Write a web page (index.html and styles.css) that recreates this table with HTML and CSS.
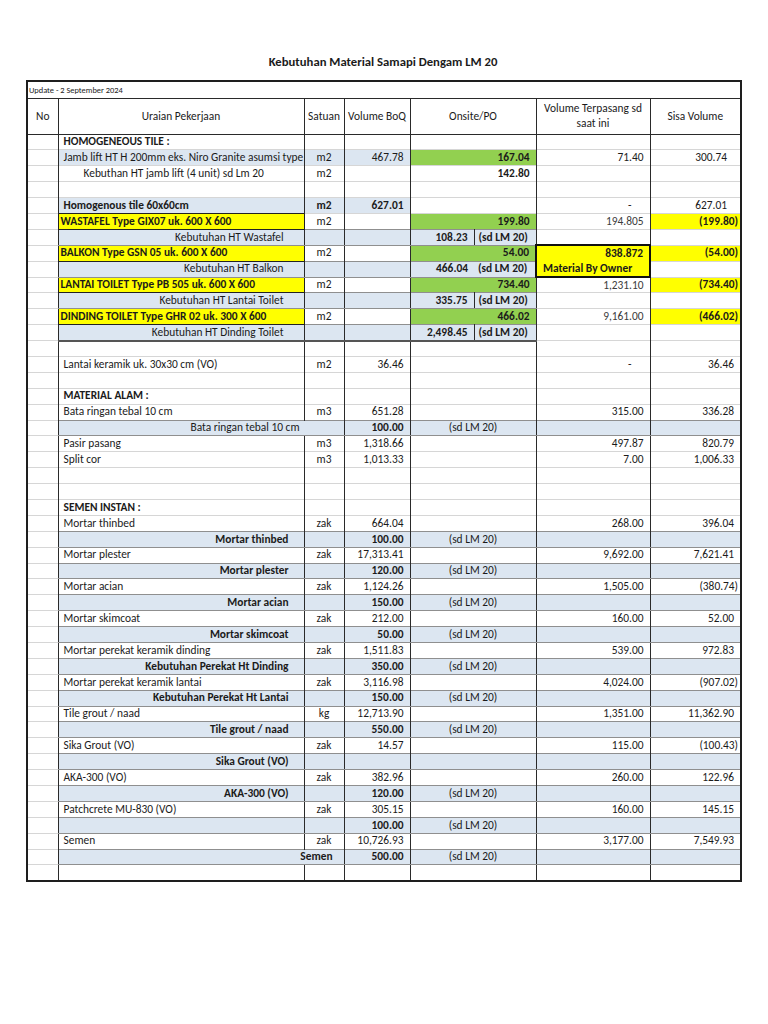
FILE: index.html
```html
<!DOCTYPE html>
<html lang="id">
<head>
<meta charset="utf-8">
<title>Kebutuhan Material</title>
<link rel="stylesheet" href="styles.css">
</head>
<body>
<div class="sheet">
  <div class="title">Kebutuhan Material Samapi Dengam LM 20</div>
  <table class="grid">
    <colgroup>
      <col class="w-no"><col class="w-ur"><col class="w-sat"><col class="w-vol"><col class="w-ona"><col class="w-onb"><col class="w-ter"><col class="w-sisa">
    </colgroup>
    <thead>
      <tr class="upd"><td colspan="8">Update - 2 September 2024</td></tr>
      <tr class="hdr">
        <th>No</th><th>Uraian Pekerjaan</th><th>Satuan</th><th>Volume BoQ</th><th colspan="2">Onsite/PO</th><th>Volume Terpasang sd<br>saat ini</th><th>Sisa Volume</th>
      </tr>
    </thead>
    <tbody>
      <tr><td></td><td class="t b">HOMOGENEOUS TILE :</td><td></td><td></td><td colspan="2"></td><td></td><td></td></tr>
      <tr><td></td><td class="t bl">Jamb lift HT H 200mm eks. Niro Granite asumsi type</td><td class="c bl">m2</td><td class="n bl">467.78</td><td colspan="2" class="n b gr">167.04</td><td class="n">71.40</td><td class="n acc">300.74</td></tr>
      <tr><td></td><td class="t ind">Kebuthan HT jamb lift (4 unit) sd Lm 20</td><td class="c">m2</td><td></td><td colspan="2" class="n b">142.80</td><td></td><td></td></tr>
      <tr><td></td><td></td><td></td><td></td><td colspan="2"></td><td></td><td></td></tr>
      <tr><td></td><td class="t b bl">Homogenous tile 60x60cm</td><td class="c b bl">m2</td><td class="n b bl">627.01</td><td colspan="2"></td><td class="n dash">-</td><td class="n acc">627.01</td></tr>
      <tr><td></td><td class="t b ye box">WASTAFEL Type GIX07 uk. 600 X 600</td><td class="c">m2</td><td></td><td colspan="2" class="n b gr">199.80</td><td class="n gray">194.805</td><td class="n neg b ye">(199.80)</td></tr>
      <tr><td></td><td class="lab bl sub">Kebutuhan HT Wastafel</td><td class="bl sub"></td><td class="bl sub"></td><td class="n b bl sub sep">108.23</td><td class="sd b bl sub nl">(sd LM 20)</td><td></td><td></td></tr>
      <tr><td></td><td class="t b ye box">BALKON Type GSN 05 uk. 600 X 600</td><td class="c">m2</td><td></td><td colspan="2" class="n b gr">54.00</td><td class="n b ye mbo1">838.872</td><td class="n neg b ye">(54.00)</td></tr>
      <tr><td></td><td class="lab bl sub">Kebutuhan HT Balkon</td><td class="bl sub"></td><td class="bl sub"></td><td class="n b bl sub">466.04</td><td class="sd b bl sub nl">(sd LM 20)</td><td class="t b ye mbo2">Material By Owner</td><td></td></tr>
      <tr><td></td><td class="t b ye box">LANTAI TOILET Type PB 505 uk. 600 X 600</td><td class="c">m2</td><td></td><td colspan="2" class="n b gr">734.40</td><td class="n gray">1,231.10</td><td class="n neg b ye">(734.40)</td></tr>
      <tr><td></td><td class="lab bl sub">Kebutuhan HT Lantai Toilet</td><td class="bl sub"></td><td class="bl sub"></td><td class="n b bl sub sep">335.75</td><td class="sd b bl sub nl">(sd LM 20)</td><td></td><td></td></tr>
      <tr><td></td><td class="t b ye box">DINDING TOILET Type GHR 02 uk. 300 X 600</td><td class="c">m2</td><td></td><td colspan="2" class="n b gr">466.02</td><td class="n gray">9,161.00</td><td class="n neg b ye">(466.02)</td></tr>
      <tr><td></td><td class="lab bl sub last">Kebutuhan HT Dinding Toilet</td><td class="bl sub last"></td><td class="bl sub last"></td><td class="n b bl sub sep last">2,498.45</td><td class="sd b bl sub nl last">(sd LM 20)</td><td></td><td></td></tr>
      <tr><td></td><td></td><td></td><td></td><td colspan="2"></td><td></td><td></td></tr>
      <tr><td></td><td class="t">Lantai keramik uk. 30x30 cm (VO)</td><td class="c">m2</td><td class="n">36.46</td><td colspan="2"></td><td class="n dash">-</td><td class="n">36.46</td></tr>
      <tr><td></td><td></td><td></td><td></td><td colspan="2"></td><td></td><td></td></tr>
      <tr><td></td><td class="t b">MATERIAL ALAM :</td><td></td><td></td><td colspan="2"></td><td></td><td></td></tr>
      <tr><td></td><td class="t">Bata ringan tebal 10 cm</td><td class="c">m3</td><td class="n">651.28</td><td colspan="2"></td><td class="n">315.00</td><td class="n">336.28</td></tr>
      <tr><td></td><td colspan="2" class="lab-bata bl sub">Bata ringan tebal 10 cm</td><td class="n b bl sub">100.00</td><td colspan="2" class="c bl sub">(sd LM 20)</td><td class="bl sub"></td><td class="bl sub"></td></tr>
      <tr><td></td><td class="t">Pasir pasang</td><td class="c">m3</td><td class="n">1,318.66</td><td colspan="2"></td><td class="n">497.87</td><td class="n">820.79</td></tr>
      <tr><td></td><td class="t">Split cor</td><td class="c">m3</td><td class="n">1,013.33</td><td colspan="2"></td><td class="n">7.00</td><td class="n">1,006.33</td></tr>
      <tr><td></td><td></td><td></td><td></td><td colspan="2"></td><td></td><td></td></tr>
      <tr><td></td><td></td><td></td><td></td><td colspan="2"></td><td></td><td></td></tr>
      <tr><td></td><td class="t b">SEMEN INSTAN :</td><td></td><td></td><td colspan="2"></td><td></td><td></td></tr>
      <tr><td></td><td class="t">Mortar thinbed</td><td class="c">zak</td><td class="n">664.04</td><td colspan="2"></td><td class="n">268.00</td><td class="n">396.04</td></tr>
      <tr><td></td><td class="lab2 b bl sub">Mortar thinbed</td><td class="bl sub"></td><td class="n b bl sub">100.00</td><td colspan="2" class="c bl sub">(sd LM 20)</td><td class="bl sub"></td><td class="bl sub"></td></tr>
      <tr><td></td><td class="t">Mortar plester</td><td class="c">zak</td><td class="n">17,313.41</td><td colspan="2"></td><td class="n">9,692.00</td><td class="n">7,621.41</td></tr>
      <tr><td></td><td class="lab2 b bl sub">Mortar plester</td><td class="bl sub"></td><td class="n b bl sub">120.00</td><td colspan="2" class="c bl sub">(sd LM 20)</td><td class="bl sub"></td><td class="bl sub"></td></tr>
      <tr><td></td><td class="t">Mortar acian</td><td class="c">zak</td><td class="n">1,124.26</td><td colspan="2"></td><td class="n">1,505.00</td><td class="n neg">(380.74)</td></tr>
      <tr><td></td><td class="lab2 b bl sub">Mortar acian</td><td class="bl sub"></td><td class="n b bl sub">150.00</td><td colspan="2" class="c bl sub">(sd LM 20)</td><td class="bl sub"></td><td class="bl sub"></td></tr>
      <tr><td></td><td class="t">Mortar skimcoat</td><td class="c">zak</td><td class="n">212.00</td><td colspan="2"></td><td class="n">160.00</td><td class="n">52.00</td></tr>
      <tr><td></td><td class="lab2 b bl sub">Mortar skimcoat</td><td class="bl sub"></td><td class="n b bl sub">50.00</td><td colspan="2" class="c bl sub">(sd LM 20)</td><td class="bl sub"></td><td class="bl sub"></td></tr>
      <tr><td></td><td class="t">Mortar perekat keramik dinding</td><td class="c">zak</td><td class="n">1,511.83</td><td colspan="2"></td><td class="n">539.00</td><td class="n">972.83</td></tr>
      <tr><td></td><td class="lab2 b bl sub">Kebutuhan Perekat Ht Dinding</td><td class="bl sub"></td><td class="n b bl sub">350.00</td><td colspan="2" class="c bl sub">(sd LM 20)</td><td class="bl sub"></td><td class="bl sub"></td></tr>
      <tr><td></td><td class="t">Mortar perekat keramik lantai</td><td class="c">zak</td><td class="n">3,116.98</td><td colspan="2"></td><td class="n">4,024.00</td><td class="n neg">(907.02)</td></tr>
      <tr><td></td><td class="lab2 b bl sub">Kebutuhan Perekat Ht Lantai</td><td class="bl sub"></td><td class="n b bl sub">150.00</td><td colspan="2" class="c bl sub">(sd LM 20)</td><td class="bl sub"></td><td class="bl sub"></td></tr>
      <tr><td></td><td class="t">Tile grout / naad</td><td class="c">kg</td><td class="n">12,713.90</td><td colspan="2"></td><td class="n">1,351.00</td><td class="n">11,362.90</td></tr>
      <tr><td></td><td class="lab2 b bl sub">Tile grout / naad</td><td class="bl sub"></td><td class="n b bl sub">550.00</td><td colspan="2" class="c bl sub">(sd LM 20)</td><td class="bl sub"></td><td class="bl sub"></td></tr>
      <tr><td></td><td class="t">Sika Grout (VO)</td><td class="c">zak</td><td class="n">14.57</td><td colspan="2"></td><td class="n">115.00</td><td class="n neg">(100.43)</td></tr>
      <tr><td></td><td class="lab2 b bl sub">Sika Grout (VO)</td><td class="bl sub"></td><td class="n b bl sub"></td><td colspan="2" class="c bl sub"></td><td class="bl sub"></td><td class="bl sub"></td></tr>
      <tr><td></td><td class="t">AKA-300 (VO)</td><td class="c">zak</td><td class="n">382.96</td><td colspan="2"></td><td class="n">260.00</td><td class="n">122.96</td></tr>
      <tr><td></td><td class="lab2 b bl sub">AKA-300 (VO)</td><td class="bl sub"></td><td class="n b bl sub">120.00</td><td colspan="2" class="c bl sub">(sd LM 20)</td><td class="bl sub"></td><td class="bl sub"></td></tr>
      <tr><td></td><td class="t">Patchcrete MU-830 (VO)</td><td class="c">zak</td><td class="n">305.15</td><td colspan="2"></td><td class="n">160.00</td><td class="n">145.15</td></tr>
      <tr><td></td><td class="lab2 b bl sub"></td><td class="bl sub"></td><td class="n b bl sub">100.00</td><td colspan="2" class="c bl sub">(sd LM 20)</td><td class="bl sub"></td><td class="bl sub"></td></tr>
      <tr><td></td><td class="t">Semen</td><td class="c">zak</td><td class="n">10,726.93</td><td colspan="2"></td><td class="n">3,177.00</td><td class="n">7,549.93</td></tr>
      <tr><td></td><td colspan="2" class="lab-semen b bl sub">Semen</td><td class="n b bl sub">500.00</td><td colspan="2" class="c bl sub">(sd LM 20)</td><td class="bl sub"></td><td class="bl sub"></td></tr>
      <tr><td></td><td></td><td></td><td></td><td colspan="2"></td><td></td><td></td></tr>
    </tbody>
  </table>
</div>
</body>
</html>
```

FILE: styles.css
```css
* { box-sizing: border-box; }
html, body { margin: 0; background: #fff; }
body {
  font-family: Carlito, Lato, "Liberation Sans", sans-serif;
  color: #1b1b1b;
}
.sheet {
  width: 714px;
  margin-left: 26px;
  padding-top: 54px;
}
.title {
  text-align: center;
  font-weight: bold;
  font-size: 12.7px;
  line-height: 16px;
  height: 26px;
}
.w-no { width: 31px; }
.w-ur { width: 246px; }
.w-sat { width: 40px; }
.w-vol { width: 66px; }
.w-ona { width: 64px; }
.w-onb { width: 62px; }
.w-ter { width: 114px; }
.w-sisa { width: 91px; }

.grid {
  width: 714px;
  table-layout: fixed;
  border-collapse: collapse;
  border: 2px solid #1e1e1e;
  font-size: 11.4px;
}
.grid td, .grid th {
  padding: 0;
  white-space: nowrap;
  overflow: hidden;
  line-height: 1;
  vertical-align: middle;
  border-left: 1px solid #2a2a2a;
  border-top: 1px solid #d6d6d6;
}
.grid tbody tr { height: 15.9px; }

.upd td {
  height: 17px;
  font-size: 8.4px;
  padding-left: 1px;
  border-bottom: 1px solid #2a2a2a;
}
.hdr th {
  height: 36px;
  font-weight: normal;
  text-align: center;
  line-height: 15px;
  border-bottom: 1px solid #2a2a2a;
}

.t { text-align: left; padding-left: 5px !important; }
.ind { padding-left: 25px !important; }
.c { text-align: center; }
.n { text-align: right; padding-right: 6px !important; }
.acc { padding-right: 13px !important; }
.neg { padding-right: 2px !important; }
.dash { padding-right: 18px !important; }
.b { font-weight: bold; }
.gray { color: #3c3c3c; }

.bl { background: #dce6f1; }
.gr { background: #92d050; }
.ye { background: #ffff00; }

.sub {
  border-top: 1px solid #8f8f8f !important;
  border-bottom: 1px solid #8f8f8f;
}
.last { border-bottom: 2px solid #555; }

.box {
  border: 1px solid #222 !important;
  padding-left: 2px !important;
}
.lab { text-align: right; padding-right: 20px !important; }
.lab2 { text-align: right; padding-right: 15px !important; }
.lab-bata { text-align: right; padding-right: 44px !important; }
.lab-semen { text-align: right; padding-right: 11px !important; }

.sep { border-right: 1px solid #2a2a2a; }
.nl { border-left: none !important; }
.sd { text-align: left; padding-left: 4px !important; }

.mbo1 {
  border: 2px solid #111 !important;
  border-bottom: none !important;
}
.mbo2 {
  border: 2px solid #111 !important;
  border-top: none !important;
  padding-left: 6px !important;
}
```
